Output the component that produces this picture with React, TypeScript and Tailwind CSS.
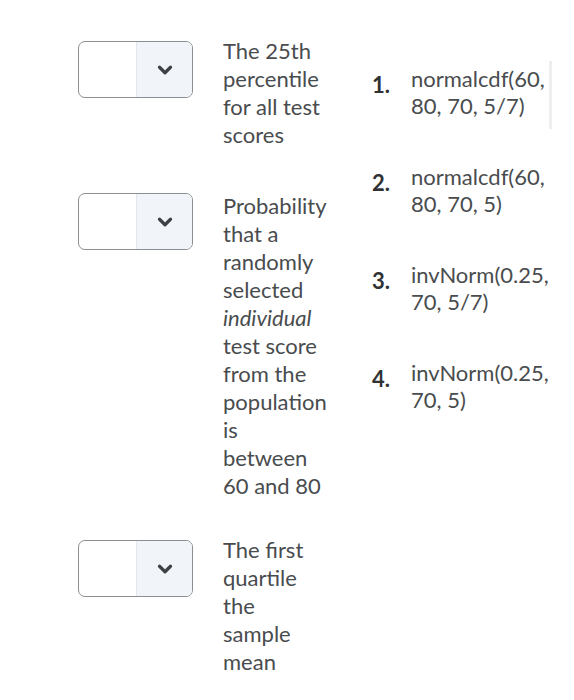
import { ChevronDown } from 'lucide-react'

const rows: { lines: React.ReactNode[]; mt: string; selMt: string }[] = [
  {
    lines: ['The 25th', 'percentile', 'for all test', 'scores'],
    mt: 'mt-0',
    selMt: 'mt-[4px]',
  },
  {
    lines: [
      'Probability',
      'that a',
      'randomly',
      'selected',
      <em key="i">individual</em>,
      'test score',
      'from the',
      'population',
      'is',
      'between',
      '60 and 80',
    ],
    mt: 'mt-[43px]',
    selMt: 'mt-[1px]',
  },
  {
    lines: ['The first', 'quartile', 'the', 'sample', 'mean'],
    mt: 'mt-[36px]',
    selMt: 'mt-[4px]',
  },
]

const answers = [
  ['normalcdf(60,', '80, 70, 5/7)'],
  ['normalcdf(60,', '80, 70, 5)'],
  ['invNorm(0.25,', '70, 5/7)'],
  ['invNorm(0.25,', '70, 5)'],
]

function Dropdown({ className }: { className: string }) {
  return (
    <div
      className={`flex h-[57px] w-[115px] shrink-0 overflow-hidden rounded-[7px] border border-[#8a8f93] bg-white ${className}`}
    >
      <div className="w-[58px] border-r border-[#e3e6ea]" />
      <div className="flex flex-1 items-center justify-center bg-[#f1f4f8]">
        <ChevronDown className="h-[22px] w-[22px] text-[#3f4244]" strokeWidth={3.5} />
      </div>
    </div>
  )
}

export default function App() {
  return (
    <div
      className="flex h-[700px] w-[574px] bg-white pt-[37px] text-[22px] leading-[28px] text-[#494c4e]"
      style={{ fontFamily: 'Lato, "Noto Sans", sans-serif' }}
    >
      <div className="ml-[78px] w-[270px] shrink-0">
        {rows.map((row, i) => (
          <div key={i} className={`flex ${row.mt}`}>
            <Dropdown className={row.selMt} />
            <div className="ml-[30px] whitespace-nowrap">
              {row.lines.map((l, j) => (
                <div key={j}>{l}</div>
              ))}
            </div>
          </div>
        ))}
      </div>

      <div className="relative ml-[24px] mt-[28px] flex-1">
        <div className="absolute left-[177px] top-[-4px] h-[68px] w-[3px] bg-[#eeeeee]" />
        <ol className="flex flex-col gap-[44px]">
          {answers.map((a, i) => (
            <li key={i} className="flex leading-[27px]">
              <span className="mt-[6px] w-[39px] font-bold text-[#303234]">{i + 1}.</span>
              <div className="whitespace-nowrap">
                <div>{a[0]}</div>
                <div>{a[1]}</div>
              </div>
            </li>
          ))}
        </ol>
      </div>
    </div>
  )
}
